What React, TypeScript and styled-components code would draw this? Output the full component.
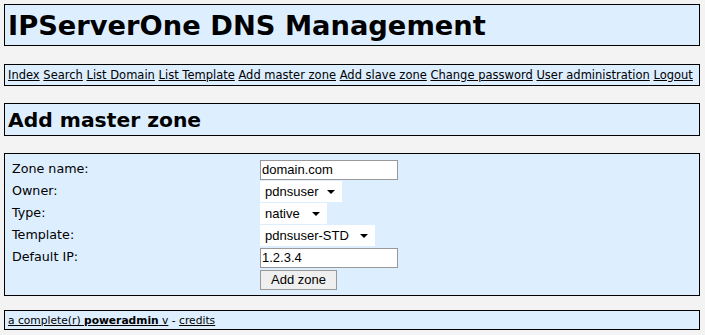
import React from "react";
import styled, { createGlobalStyle } from "styled-components";

const Global = createGlobalStyle`
  html, body { margin: 0; padding: 0; background: #f3f3f3; }
  body { padding: 4px 5px 0 4px; font-family: "DejaVu Sans", Verdana, sans-serif; color: #000; }
`;

const Box = styled.div<{ $mt?: number }>`
  background: #ddeeff;
  border: 1px solid #000;
  margin-top: ${(p) => p.$mt ?? 0}px;
`;

const Title = styled.h1`
  margin: 0;
  padding: 6px 3px 4px;
  font-size: 27.3px;
  line-height: 30px;
  font-weight: bold;
`;

const Nav = styled.div`
  padding: 3px 3px 2px;
  font-size: 11.5px;
  line-height: 15px;
  white-space: nowrap;
`;

const NavLink = styled.a`
  color: #000;
  text-decoration: underline;
`;

const SubTitle = styled.h2`
  margin: 0;
  padding: 5px 3px 4px;
  font-size: 20.3px;
  line-height: 22px;
  font-weight: bold;
`;

const Form = styled.div`
  display: grid;
  grid-template-columns: 248px auto;
  justify-content: start;
  align-items: center;
  row-gap: 1px;
  padding: 5px 7px 5px 7px;
`;

const Label = styled.div`
  font-size: 12.7px;
  line-height: 15px;
  padding-bottom: 2px;
`;

const Field = styled.div`
  display: flex;
  align-items: center;
  height: 21px;
`;

const TextInput = styled.input`
  box-sizing: border-box;
  width: 138px;
  height: 20px;
  border: 1px solid #999;
  padding: 0 1px;
  font-family: "Liberation Sans", Arial, sans-serif;
  font-size: 13px;
  background: #fff;
  color: #000;
  outline: none;
`;

const Select = styled.div<{ $w: number }>`
  box-sizing: border-box;
  width: ${(p) => p.$w}px;
  height: 21px;
  background: #fff;
  display: flex;
  align-items: center;
  justify-content: space-between;
  padding: 0 7px 0 5px;
  font-family: "Liberation Sans", Arial, sans-serif;
  font-size: 13px;
`;

const Arrow = styled.span`
  width: 0;
  height: 0;
  border-left: 4px solid transparent;
  border-right: 4px solid transparent;
  border-top: 4px solid #000;
`;

const Button = styled.button`
  box-sizing: border-box;
  width: 77px;
  height: 20px;
  border: 1px solid #999;
  background: #efefef;
  font-family: "Liberation Sans", Arial, sans-serif;
  font-size: 13px;
  padding: 0;
  color: #000;
`;

const Footer = styled.div`
  padding: 3px 3px 2px;
  font-size: 10.7px;
  line-height: 13px;
`;

const FootLink = styled.a`
  color: #000;
  text-decoration: underline;
`;

const links = [
  "Index",
  "Search",
  "List Domain",
  "List Template",
  "Add master zone",
  "Add slave zone",
  "Change password",
  "User administration",
  "Logout",
];

export default function App() {
  return (
    <>
      <Global />
      <Box>
        <Title>IPServerOne DNS Management</Title>
      </Box>
      <Box $mt={18}>
        <Nav>
          {links.map((l, i) => (
            <React.Fragment key={l}>
              {i > 0 && " "}
              <NavLink href="#">{l}</NavLink>
            </React.Fragment>
          ))}
        </Nav>
      </Box>
      <Box $mt={17}>
        <SubTitle>Add master zone</SubTitle>
      </Box>
      <Box $mt={17}>
        <Form>
          <Label>Zone name:</Label>
          <Field>
            <TextInput defaultValue="domain.com" />
          </Field>
          <Label>Owner:</Label>
          <Field>
            <Select $w={82}>
              pdnsuser <Arrow />
            </Select>
          </Field>
          <Label>Type:</Label>
          <Field>
            <Select $w={67}>
              native <Arrow />
            </Select>
          </Field>
          <Label>Template:</Label>
          <Field>
            <Select $w={115}>
              pdnsuser-STD <Arrow />
            </Select>
          </Field>
          <Label>Default IP:</Label>
          <Field>
            <TextInput defaultValue="1.2.3.4" />
          </Field>
          <Label />
          <Field>
            <Button>Add zone</Button>
          </Field>
        </Form>
      </Box>
      <Box $mt={14}>
        <Footer>
          <FootLink href="#">
            a complete(r) <b>poweradmin</b> v
          </FootLink>{" "}
          - <FootLink href="#">credits</FootLink>
        </Footer>
      </Box>
    </>
  );
}
